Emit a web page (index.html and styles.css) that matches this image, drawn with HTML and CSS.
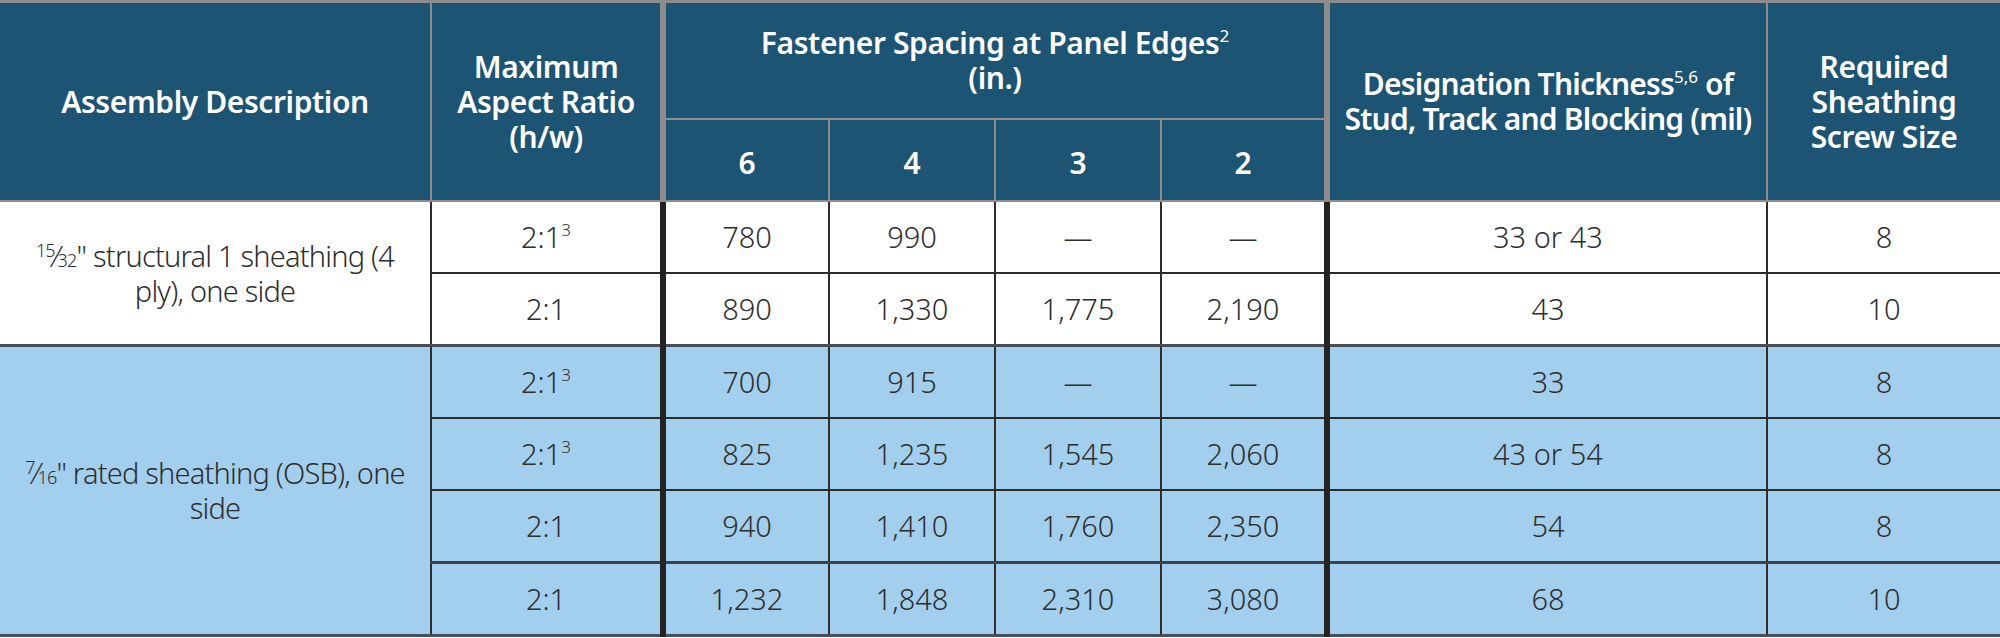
FILE: index.html
```html
<!DOCTYPE html>
<html>
<head>
<meta charset="utf-8">
<link rel="stylesheet" href="styles.css">
</head>
<body>
<table class="spec">
  <colgroup>
    <col class="c-desc"><col class="c-ratio"><col class="c-sp"><col class="c-sp"><col class="c-sp"><col class="c-sp"><col class="c-thick"><col class="c-screw">
  </colgroup>
  <thead>
    <tr class="h1">
      <th rowspan="2">Assembly Description</th>
      <th rowspan="2">Maximum<br>Aspect Ratio<br>(h/w)</th>
      <th colspan="4" class="grp">Fastener Spacing at Panel Edges<sup>2</sup><br>(in.)</th>
      <th rowspan="2" class="grp nowrap">Designation Thickness<sup>5,6</sup> of<br>Stud, Track and Blocking (mil)</th>
      <th rowspan="2">Required<br>Sheathing<br>Screw Size</th>
    </tr>
    <tr class="h2">
      <th class="grp">6</th><th>4</th><th>3</th><th>2</th>
    </tr>
  </thead>
  <tbody class="white">
    <tr>
      <td rowspan="2" class="desc"><span class="fr"><span class="num">15</span>⁄<span class="den">32</span></span>" structural 1 sheathing (4<br>ply), one side</td>
      <td>2:1<sup>3</sup></td>
      <td class="grp">780</td><td>990</td><td>—</td><td>—</td>
      <td class="grp">33 or 43</td><td>8</td>
    </tr>
    <tr>
      <td>2:1</td>
      <td class="grp">890</td><td>1,330</td><td>1,775</td><td>2,190</td>
      <td class="grp">43</td><td>10</td>
    </tr>
  </tbody>
  <tbody class="blue">
    <tr>
      <td rowspan="4" class="desc"><span class="fr"><span class="num">7</span>⁄<span class="den">16</span></span>" rated sheathing (OSB), one<br>side</td>
      <td>2:1<sup>3</sup></td>
      <td class="grp">700</td><td>915</td><td>—</td><td>—</td>
      <td class="grp">33</td><td>8</td>
    </tr>
    <tr>
      <td>2:1<sup>3</sup></td>
      <td class="grp">825</td><td>1,235</td><td>1,545</td><td>2,060</td>
      <td class="grp">43 or 54</td><td>8</td>
    </tr>
    <tr>
      <td>2:1</td>
      <td class="grp">940</td><td>1,410</td><td>1,760</td><td>2,350</td>
      <td class="grp">54</td><td>8</td>
    </tr>
    <tr>
      <td>2:1</td>
      <td class="grp">1,232</td><td>1,848</td><td>2,310</td><td>3,080</td>
      <td class="grp">68</td><td>10</td>
    </tr>
  </tbody>
</table>
</body>
</html>
```
FILE: styles.css
```css
html, body {
  margin: 0;
  padding: 0;
  background: #ffffff;
}

.spec {
  width: 2000px;
  border-collapse: collapse;
  table-layout: fixed;
  font-family: "Noto Sans", "DejaVu Sans Condensed", sans-serif;
  font-stretch: condensed;
}

.c-desc { width: 431px; }
.c-ratio { width: 232px; }
.c-sp { width: 166px; }
.c-thick { width: 440px; }
.c-screw { width: 233px; }

.spec th {
  background: #1d5373;
  color: #ffffff;
  font-weight: 600;
  font-size: 30px;
  line-height: 35px;
  letter-spacing: -0.4px;
  text-align: center;
  vertical-align: middle;
  border: 2px solid #8d8d8d;
  padding: 0 4px;
}

.spec th.nowrap {
  white-space: nowrap;
  letter-spacing: -0.8px;
}

.spec tr.h1 th { border-top: 3px solid #8d8d8d; }
.spec tr.h1 { height: 117px; }
.spec tr.h2 { height: 82px; }
.spec tr.h2 th { padding-top: 6px; }

.spec th.grp { border-left: 6px solid #8d8d8d; }
.spec tr.h1 th:last-child { border-right: none; }
.spec tr.h1 th:first-child { border-left: none; }

.spec th sup {
  font-size: 17px;
  line-height: 0;
  vertical-align: 12px;
  font-weight: normal;
  letter-spacing: 0;
}

.spec td {
  color: #2e2e2e;
  font-weight: 300;
  font-size: 29px;
  line-height: 35px;
  text-align: center;
  vertical-align: middle;
  height: 70px;
  padding: 0 6px;
  border: 2px solid #2d2d2d;
}

.spec td.desc { letter-spacing: -0.8px; }

.spec td.grp { border-left: 6px solid #232323; }
.spec tr td:first-child { border-left: none; }
.spec tr td:last-child { border-right: none; }

.spec tbody.white td { background: #ffffff; }
.spec tbody.blue td { background: #a3cfef; }
.spec tbody.blue tr:first-child td { border-top: 3px solid #4a4f55; }
.spec tbody.blue tr:last-child td { border-bottom: 3px solid #4a4f55; }
.spec tbody.blue tr:nth-child(4) td { border-top: 3px solid #3e4349; }
.spec tbody.blue tr:first-child td.desc { border-bottom: 3px solid #4a4f55; }

.spec td sup {
  font-size: 17px;
  line-height: 0;
  vertical-align: 12px;
}

.fr .num {
  font-size: 18px;
  vertical-align: 10px;
  line-height: 0;
}
.fr .den {
  font-size: 18px;
  line-height: 0;
}
```
